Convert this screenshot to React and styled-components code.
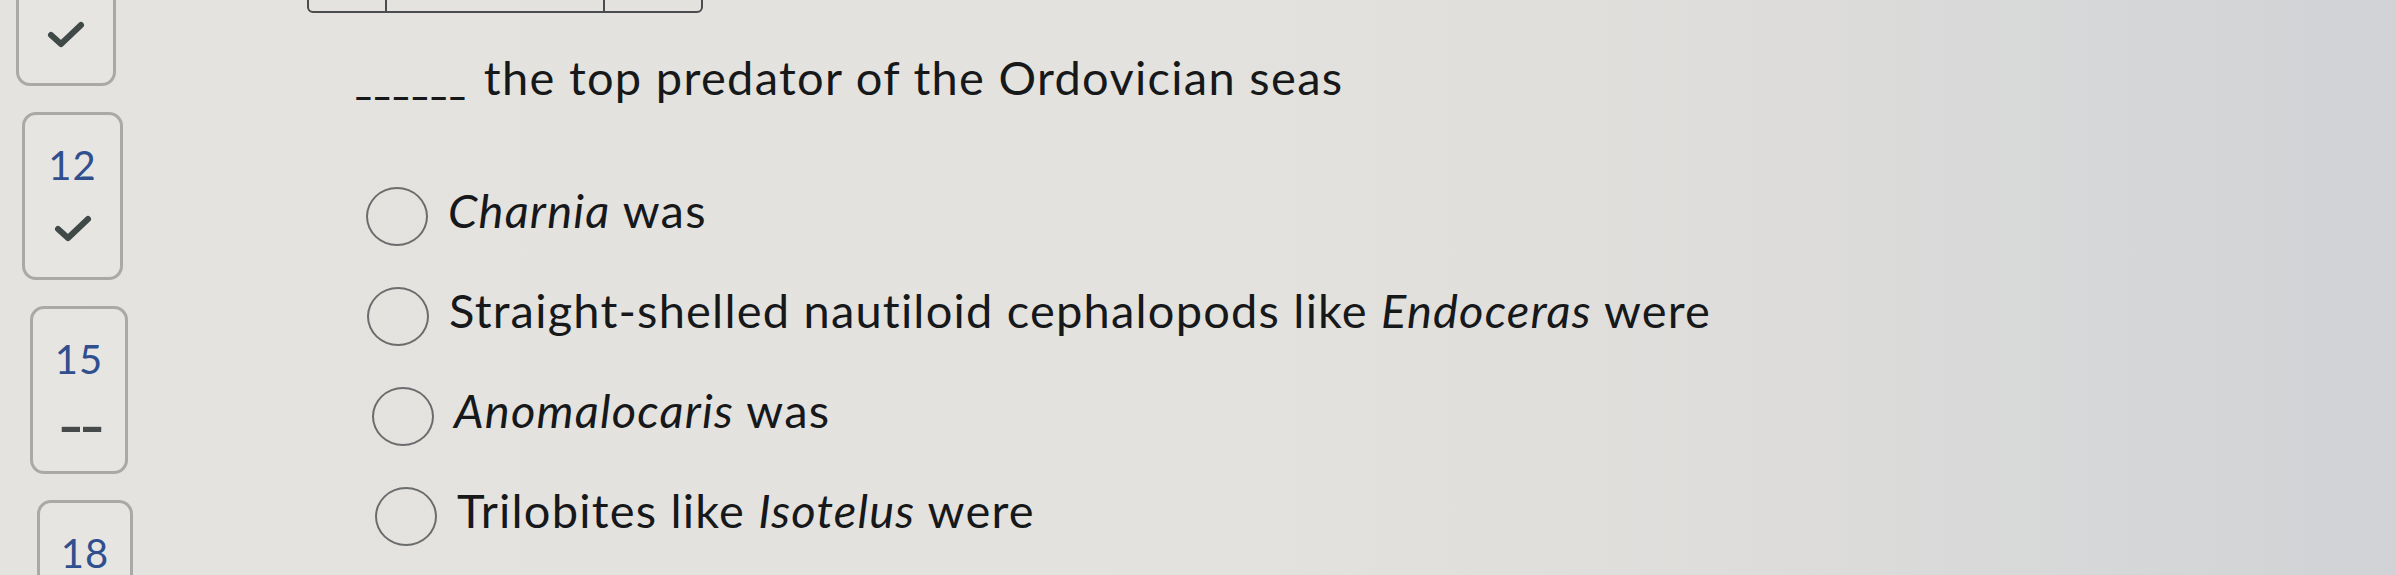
import React from "react";
import styled, { createGlobalStyle } from "styled-components";

const GlobalStyle = createGlobalStyle`
  html, body {
    margin: 0;
    padding: 0;
  }
  body {
    width: 2396px;
    height: 575px;
    overflow: hidden;
    background: linear-gradient(90deg, #e4e3df 0%, #e3e2de 50%, #dedddb 72%, #d6d7d8 88%, #d1d2d5 100%);
    font-family: Lato, "Open Sans", sans-serif;
    color: #16181a;
  }
`;

const Page = styled.div`
  display: flex;
  height: 575px;
  overflow: hidden;
`;

const Nav = styled.nav`
  box-sizing: border-box;
  flex: none;
  width: 300px;
  padding-left: 16px;
  margin-top: -82px;
  display: flex;
  flex-direction: column;
  gap: 26px;
`;

const Tile = styled.div`
  box-sizing: border-box;
  flex: none;
  width: ${({ w }) => w}px;
  height: 168px;
  margin-left: ${({ shift }) => shift}px;
  padding-top: 35px;
  border: 3px solid #a9a9a8;
  border-radius: 14px;
  background: #e6e5e2;
  display: flex;
  flex-direction: column;
  align-items: center;
`;

const TileNumber = styled.div`
  height: 30px;
  font-size: 40px;
  line-height: 30px;
  letter-spacing: 1px;
  color: #2f4f8f;
`;

const TileCheck = styled.svg`
  margin-top: 34px;
  width: 40px;
  height: 30px;
`;

const TileDash = styled.div`
  margin-top: 29px;
  font-size: 46px;
  font-weight: 900;
  line-height: 1;
  letter-spacing: -3px;
  color: #474a4a;
  transform: scaleX(1.5);
`;

const Main = styled.main`
  flex: 1;
  display: flex;
  flex-direction: column;
`;

const TableStub = styled.div`
  box-sizing: border-box;
  margin: -27px 0 0 7px;
  width: 396px;
  height: 40px;
  border: 2px solid #4b4c4d;
  border-radius: 0 0 6px 6px;
  display: grid;
  grid-template-columns: 78px 218px 1fr;
`;

const TableCell = styled.div`
  border-right: ${({ last }) => (last ? "none" : "2px solid #4b4c4d")};
  background: ${({ light }) => (light ? "linear-gradient(180deg, #f4f4f2 0 14px, transparent 14px)" : "transparent")};
`;

const Question = styled.p`
  margin: 36px 0 0 55px;
  font-size: 47px;
  line-height: 1.2;
  letter-spacing: 1.3px;
  white-space: pre;
`;

const Blank = styled.span`
  font-size: 36px;
  font-weight: 700;
  letter-spacing: 2px;
  margin-right: 16px;
`;

const Options = styled.ul`
  list-style: none;
  margin: 61px 0 0 0;
  padding: 0;
  display: flex;
  flex-direction: column;
`;

const Option = styled.li`
  height: ${({ h }) => h}px;
  padding-left: ${({ indent }) => indent}px;
  display: flex;
  align-items: center;
  gap: 20px;
`;

const Radio = styled.span`
  box-sizing: border-box;
  flex: none;
  width: 62px;
  height: 59px;
  border: 2.5px solid #6b6c6d;
  border-radius: 50%;
`;

const Label = styled.span`
  font-size: 47px;
  line-height: 1.2;
  letter-spacing: 1.2px;
  margin-top: -12px;
  white-space: pre;

  em {
    font-style: italic;
  }
`;

const Check = () => (
  <TileCheck viewBox="0 0 40 30">
    <polyline
      points="5,15 15,24 35,5"
      fill="none"
      stroke="#3f4948"
      strokeWidth="6"
      strokeLinecap="round"
      strokeLinejoin="round"
    />
  </TileCheck>
);

const tiles = [
  { id: "t9", n: "", w: 100, shift: 0, mark: "check" },
  { id: "t12", n: "12", w: 101, shift: 6, mark: "check" },
  { id: "t15", n: "15", w: 98, shift: 14, mark: "dash" },
  { id: "t18", n: "18", w: 96, shift: 21, mark: "none" },
];

const options = [
  { h: 100, indent: 66, label: <><em>Charnia</em> was</> },
  { h: 100, indent: 67, label: <>Straight-shelled nautiloid cephalopods like <em>Endoceras</em> were</> },
  { h: 100, indent: 72, label: <><em>Anomalocaris</em> was</> },
  { h: 100, indent: 75, label: <>Trilobites like <em>Isotelus</em> were</> },
];

export default function App() {
  return (
    <>
      <GlobalStyle />
      <Page>
        <Nav>
          {tiles.map((t) => (
            <Tile key={t.id} w={t.w} shift={t.shift}>
              <TileNumber>{t.n}</TileNumber>
              {t.mark === "check" && <Check />}
              {t.mark === "dash" && <TileDash>--</TileDash>}
            </Tile>
          ))}
        </Nav>
        <Main>
          <TableStub>
            <TableCell light />
            <TableCell />
            <TableCell last />
          </TableStub>
          <Question>
            <Blank>______</Blank>the top predator of the Ordovician seas
          </Question>
          <Options>
            {options.map((o, i) => (
              <Option key={i} h={o.h} indent={o.indent}>
                <Radio />
                <Label>{o.label}</Label>
              </Option>
            ))}
          </Options>
        </Main>
      </Page>
    </>
  );
}
